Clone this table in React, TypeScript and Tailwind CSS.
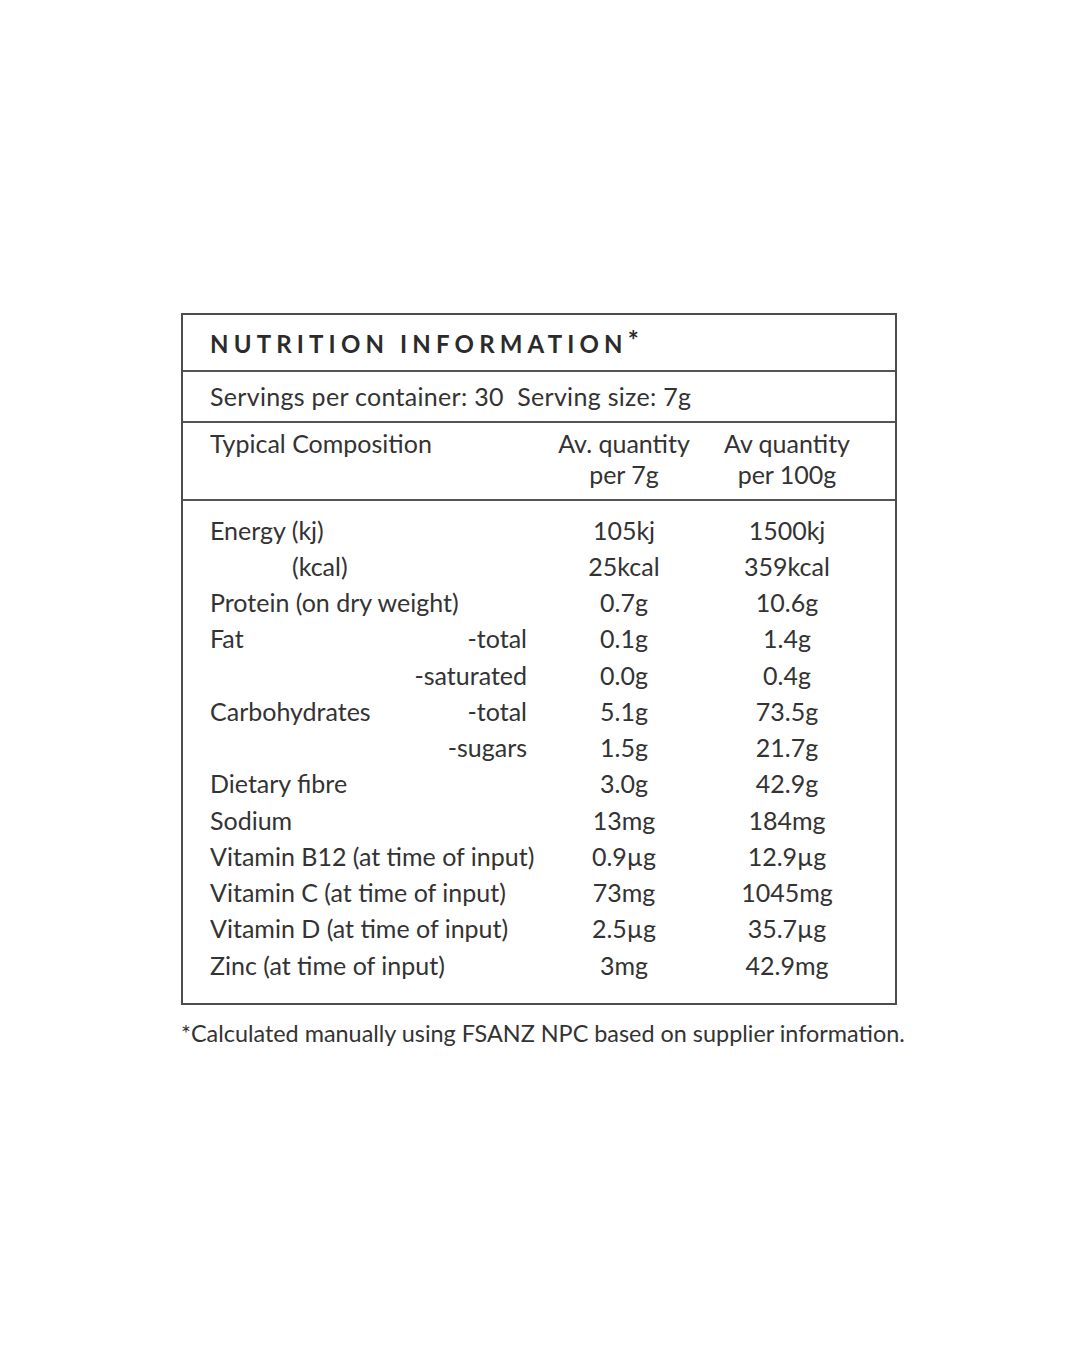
const rows: { label: string; sub?: string; indent?: boolean; a: string; b: string }[] = [
  { label: "Energy (kj)", a: "105kj", b: "1500kj" },
  { label: "(kcal)", indent: true, a: "25kcal", b: "359kcal" },
  { label: "Protein (on dry weight)", a: "0.7g", b: "10.6g" },
  { label: "Fat", sub: "-total", a: "0.1g", b: "1.4g" },
  { label: "", sub: "-saturated", a: "0.0g", b: "0.4g" },
  { label: "Carbohydrates", sub: "-total", a: "5.1g", b: "73.5g" },
  { label: "", sub: "-sugars", a: "1.5g", b: "21.7g" },
  { label: "Dietary fibre", a: "3.0g", b: "42.9g" },
  { label: "Sodium", a: "13mg", b: "184mg" },
  { label: "Vitamin B12 (at time of input)", a: "0.9µg", b: "12.9µg" },
  { label: "Vitamin C (at time of input)", a: "73mg", b: "1045mg" },
  { label: "Vitamin D (at time of input)", a: "2.5µg", b: "35.7µg" },
  { label: "Zinc (at time of input)", a: "3mg", b: "42.9mg" },
];

export default function App() {
  return (
    <div className="min-h-[1350px] bg-white pt-[313px] pl-[181px] font-['Lato',sans-serif] text-[#333333]">
      <div className="w-[716px] border-2 border-[#4d4d4d]">
        <div className="h-[57px] border-b-2 border-[#555555] pl-[27px] pt-[17px]">
          <h1 className="flex items-start text-[24px] font-bold leading-none tracking-[0.215em] text-[#2b2b2b]">
            NUTRITION INFORMATION
            <span className="-mt-[5px] text-[26px] tracking-normal">*</span>
          </h1>
        </div>
        <div className="h-[51px] border-b-2 border-[#555555] pl-[27px] pt-[9px] text-[25px] leading-[30px] tracking-[0.3px]">
          Servings per container: 30&nbsp; Serving size: 7g
        </div>
        <div className="grid h-[78px] grid-cols-[334px_160px_166px] border-b-2 border-[#555555] pl-[27px] pt-[5px] text-[25px] leading-[31px]">
          <div>Typical Composition</div>
          <div className="text-center">
            Av. quantity
            <br />
            per 7g
          </div>
          <div className="text-center">
            Av quantity
            <br />
            per 100g
          </div>
        </div>
        <div className="pl-[27px] pt-[11px] pb-[20px] text-[25px]">
          {rows.map((r, i) => (
            <div key={i} className="grid h-[36.25px] grid-cols-[334px_160px_166px] items-center leading-none">
              <div className="flex justify-between whitespace-nowrap">
                <span className={r.indent ? "pl-[82px]" : ""}>{r.label}</span>
                {r.sub && <span className="mr-[17px]">{r.sub}</span>}
              </div>
              <div className="text-center">{r.a}</div>
              <div className="text-center">{r.b}</div>
            </div>
          ))}
        </div>
      </div>
      <p className="mt-[17px] text-[23.4px] leading-none">
        *Calculated manually using FSANZ NPC based on supplier information.
      </p>
    </div>
  );
}
